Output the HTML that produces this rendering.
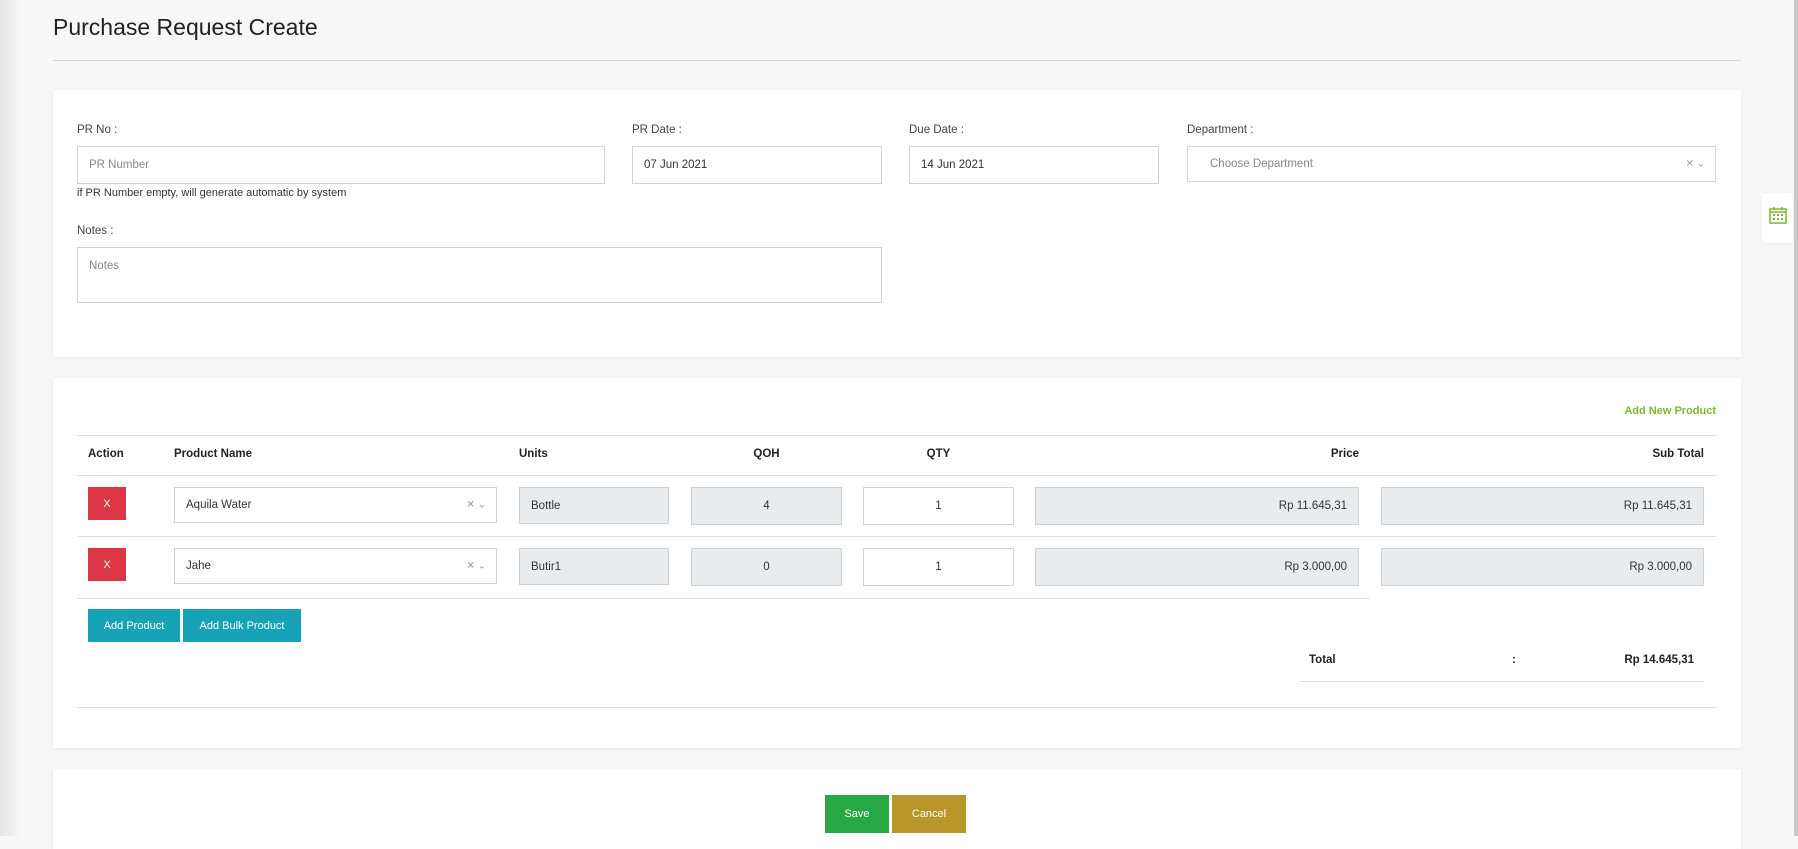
<!DOCTYPE html>
<html><head><meta charset="utf-8"><style>
*{box-sizing:border-box;margin:0;padding:0}
body{width:1798px;height:836px;overflow:hidden;background:#f7f7f7;font-family:"Liberation Sans",sans-serif;color:#333;position:relative}
.a{position:absolute}
.shade{left:0;top:0;width:22px;height:836px;background:linear-gradient(to right,#e6e6e6,#f7f7f7)}
.card{background:#fff;box-shadow:0 1px 4px rgba(0,0,0,.06)}
.lbl{font-size:11.5px;color:#444}
.inp{border:1px solid #d4d4d4;background:#fff;font-size:11.5px;padding-left:11px;display:flex;align-items:center;color:#333}
.ph{color:#888}
.dis{background:#e9ecef;border:1px solid #d0d3d6}
.th{font-size:11.5px;font-weight:bold;color:#222}
.line{height:1px;background:#e2e2e2}
.btn{color:#fff;font-size:11px;display:flex;align-items:center;justify-content:center}
.sx{position:absolute;right:10px;top:50%;transform:translateY(-50%);font-size:10px;color:#999}
</style></head><body>
<div class="a shade"></div>
<div class="a" style="left:53px;top:14px;font-size:23px;color:#222">Purchase Request Create</div>
<div class="a line" style="left:53px;top:60px;width:1688px;background:#d6d6d6"></div>

<div class="a card" style="left:53px;top:90px;width:1688px;height:267px"></div>
<div class="a lbl" style="left:77px;top:124px">PR No :</div>
<div class="a inp" style="left:77px;top:146px;width:528px;height:38px"><span class="ph">PR Number</span></div>
<div class="a" style="left:77px;top:187px;font-size:11px;color:#333">if PR Number empty, will generate automatic by system</div>
<div class="a lbl" style="left:632px;top:124px">PR Date :</div>
<div class="a inp" style="left:632px;top:146px;width:250px;height:38px">07 Jun 2021</div>
<div class="a lbl" style="left:909px;top:124px">Due Date :</div>
<div class="a inp" style="left:909px;top:146px;width:250px;height:38px">14 Jun 2021</div>
<div class="a lbl" style="left:1187px;top:124px">Department :</div>
<div class="a inp" style="left:1187px;top:146px;width:529px;height:36px;padding-left:22px"><span class="ph">Choose Department</span><span class="sx">✕ ⌄</span></div>
<div class="a lbl" style="left:77px;top:225px">Notes :</div>
<div class="a inp" style="left:77px;top:247px;width:805px;height:56px;align-items:flex-start;padding-top:12px"><span class="ph">Notes</span></div>

<div class="a card" style="left:1762px;top:193px;width:31px;height:50px;border-radius:4px"></div>
<svg class="a" style="left:1768px;top:205px" width="20" height="20" viewBox="0 0 20 20" fill="none" stroke="#7cb82f" stroke-width="1.5"><rect x="2" y="4" width="16" height="14"/><line x1="2" y1="7" x2="18" y2="7"/><line x1="6" y1="2" x2="6" y2="5"/><line x1="14" y1="2" x2="14" y2="5"/><g fill="#7cb82f" stroke="none"><rect x="5" y="9" width="2" height="2"/><rect x="9" y="9" width="2" height="2"/><rect x="13" y="9" width="2" height="2"/><rect x="5" y="13" width="2" height="2"/><rect x="9" y="13" width="2" height="2"/><rect x="13" y="13" width="2" height="2"/></g></svg>
<div class="a" style="left:1794px;top:0;width:4px;height:836px;background:#c9c9c9"></div>

<div class="a card" style="left:53px;top:378px;width:1688px;height:370px"></div>
<div class="a" style="right:82px;top:405px;font-size:11px;font-weight:bold;color:#7cb82f">Add New Product</div>
<div class="a line" style="left:77px;top:435px;width:1639px"></div>
<div class="a th" style="left:88px;top:448px">Action</div>
<div class="a th" style="left:174px;top:448px">Product Name</div>
<div class="a th" style="left:519px;top:448px">Units</div>
<div class="a th" style="left:691px;top:448px;width:151px;text-align:center">QOH</div>
<div class="a th" style="left:863px;top:448px;width:151px;text-align:center">QTY</div>
<div class="a th" style="left:1035px;top:448px;width:324px;text-align:right">Price</div>
<div class="a th" style="left:1381px;top:448px;width:323px;text-align:right">Sub Total</div>
<div class="a line" style="left:77px;top:475px;width:1639px"></div>

<div class="a btn" style="left:88px;top:487px;width:38px;height:33px;background:#dc3545">X</div>
<div class="a inp" style="left:174px;top:487px;width:323px;height:36px">Aquila Water<span class="sx">✕ ⌄</span></div>
<div class="a inp dis" style="left:519px;top:487px;width:150px;height:37px">Bottle</div>
<div class="a inp dis" style="left:691px;top:487px;width:151px;height:38px;justify-content:center;padding:0">4</div>
<div class="a inp" style="left:863px;top:487px;width:151px;height:38px;justify-content:center;padding:0">1</div>
<div class="a inp dis" style="left:1035px;top:487px;width:324px;height:38px;justify-content:flex-end;padding-right:11px">Rp 11.645,31</div>
<div class="a inp dis" style="left:1381px;top:487px;width:323px;height:38px;justify-content:flex-end;padding-right:11px">Rp 11.645,31</div>
<div class="a line" style="left:77px;top:536px;width:1639px"></div>

<div class="a btn" style="left:88px;top:548px;width:38px;height:33px;background:#dc3545">X</div>
<div class="a inp" style="left:174px;top:548px;width:323px;height:36px">Jahe<span class="sx">✕ ⌄</span></div>
<div class="a inp dis" style="left:519px;top:548px;width:150px;height:37px">Butir1</div>
<div class="a inp dis" style="left:691px;top:548px;width:151px;height:38px;justify-content:center;padding:0">0</div>
<div class="a inp" style="left:863px;top:548px;width:151px;height:38px;justify-content:center;padding:0">1</div>
<div class="a inp dis" style="left:1035px;top:548px;width:324px;height:38px;justify-content:flex-end;padding-right:11px">Rp 3.000,00</div>
<div class="a inp dis" style="left:1381px;top:548px;width:323px;height:38px;justify-content:flex-end;padding-right:11px">Rp 3.000,00</div>
<div class="a line" style="left:77px;top:598px;width:1293px"></div>

<div class="a btn" style="left:88px;top:609px;width:92px;height:33px;background:#17a2b8">Add Product</div>
<div class="a btn" style="left:183px;top:609px;width:118px;height:33px;background:#17a2b8">Add Bulk Product</div>

<div class="a th" style="left:1309px;top:654px">Total</div>
<div class="a th" style="left:1512px;top:654px">:</div>
<div class="a th" style="left:1500px;top:654px;width:194px;text-align:right">Rp 14.645,31</div>
<div class="a line" style="left:1299px;top:681px;width:405px"></div>
<div class="a line" style="left:77px;top:707px;width:1639px"></div>

<div class="a card" style="left:53px;top:769px;width:1688px;height:80px"></div>
<div class="a btn" style="left:825px;top:795px;width:64px;height:38px;background:#28a745">Save</div>
<div class="a btn" style="left:892px;top:795px;width:74px;height:38px;background:#b8962a">Cancel</div>
</body></html>
